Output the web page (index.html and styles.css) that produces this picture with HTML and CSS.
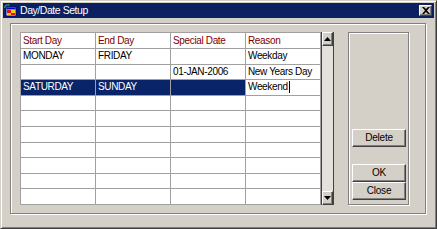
FILE: index.html
```html
<!DOCTYPE html>
<html>
<head>
<meta charset="utf-8">
<link rel="stylesheet" href="styles.css">
</head>
<body>
<div class="win">
  <div class="titlebar">
    <svg class="appicon" viewBox="0 0 13 13" width="13" height="13">
      <rect x="2" y="3" width="10" height="9" fill="#fff" stroke="#0000a0" stroke-width="1"/>
      <rect x="2.5" y="3.5" width="9" height="2" fill="#0000c0"/>
      <rect x="3" y="6" width="4" height="3" fill="#e01010"/>
      <rect x="7" y="6" width="4" height="3" fill="#f0d000"/>
      <rect x="3" y="9" width="4" height="2" fill="#f0d000"/>
      <rect x="7" y="9" width="4" height="2" fill="#e01010"/>
      <path d="M0.5 4 C1 1.5 3 0.5 5 1" fill="none" stroke="#20a040" stroke-width="1.2"/>
      <path d="M4 0 L6 1 L4.5 2.5" fill="#20a040"/>
    </svg>
    <span class="title">Day/Date Setup</span>
    <div class="closebtn">
      <svg viewBox="0 0 8 7" width="8" height="7"><path d="M0 0 L2 0 L4 2 L6 0 L8 0 L5 3.5 L8 7 L6 7 L4 5 L2 7 L0 7 L3 3.5 Z" fill="#000"/></svg>
    </div>
  </div>
  <div class="client">
    <div class="frame">
      <div class="row">
        <div class="grid">
          <div class="cell hd">Start Day</div><div class="cell hd">End Day</div><div class="cell hd">Special Date</div><div class="cell hd">Reason</div>
          <div class="cell">MONDAY</div><div class="cell">FRIDAY</div><div class="cell"></div><div class="cell">Weekday</div>
          <div class="cell"></div><div class="cell"></div><div class="cell">01-JAN-2006</div><div class="cell">New Years Day</div>
          <div class="cell sel">SATURDAY</div><div class="cell sel">SUNDAY</div><div class="cell sel"></div><div class="cell edit">Weekend<span class="caret"></span></div>
          <div class="cell"></div><div class="cell"></div><div class="cell"></div><div class="cell"></div>
          <div class="cell"></div><div class="cell"></div><div class="cell"></div><div class="cell"></div>
          <div class="cell"></div><div class="cell"></div><div class="cell"></div><div class="cell"></div>
          <div class="cell"></div><div class="cell"></div><div class="cell"></div><div class="cell"></div>
          <div class="cell"></div><div class="cell"></div><div class="cell"></div><div class="cell"></div>
          <div class="cell"></div><div class="cell"></div><div class="cell"></div><div class="cell"></div>
          <div class="cell"></div><div class="cell"></div><div class="cell"></div><div class="cell"></div>
        </div>
        <div class="scrollbar">
          <div class="sbtn"><svg viewBox="0 0 7 4" width="7" height="4"><path d="M3.5 0 L7 4 L0 4 Z" fill="#000"/></svg></div>
          <div class="track"></div>
          <div class="sbtn"><svg viewBox="0 0 7 4" width="7" height="4"><path d="M0 0 L7 0 L3.5 4 Z" fill="#000"/></svg></div>
        </div>
        <div class="side">
          <button class="btn">Delete</button>
          <div class="gap"></div>
          <button class="btn">OK</button>
          <button class="btn">Close</button>
        </div>
      </div>
    </div>
  </div>
</div>
</body>
</html>
```
FILE: styles.css
```css
* { box-sizing: border-box; }
html, body { margin: 0; padding: 0; background: #d4d0c8; }
body {
  width: 437px; height: 229px; overflow: hidden;
  font-family: "Liberation Sans", Arial, sans-serif;
  font-size: 10px;
}
.win {
  width: 437px; height: 229px;
  border: 1px solid;
  border-color: #d4d0c8 #404040 #404040 #d4d0c8;
  box-shadow: inset 1px 1px #fff, inset -1px -1px #808080;
  padding: 2px;
  display: flex; flex-direction: column;
  background: #d4d0c8;
}
.titlebar {
  height: 15px; flex: none;
  background: #0a2060;
  display: flex; align-items: center;
  padding: 0 2px 0 1px;
  color: #fff;
}
.appicon { flex: none; }
.title {
  flex: 1; margin-left: 3px;
  font-size: 10.5px; letter-spacing: -0.45px;
  line-height: 15px;
}
.closebtn {
  width: 13px; height: 11px; flex: none;
  background: #d4d0c8;
  border: 1px solid;
  border-color: #fff #404040 #404040 #fff;
  box-shadow: inset -1px -1px #808080;
  display: flex; align-items: center; justify-content: center;
}
.client {
  flex: 1;
  padding: 5px 8px 12px 7px;
  display: flex;
}
.frame {
  flex: 1;
  border: 1px solid #808080;
  box-shadow: inset 1px 1px #fff, 1px 1px #fff;
  padding: 8px 0 0 9px;
}
.row {
  display: flex; align-items: stretch;
}
.grid {
  display: grid;
  grid-template-columns: 75px 75px 75px 75px;
  grid-template-rows: 16px repeat(10, 15.6px);
  border-left: 1px solid #a0a0a0;
  border-top: 1px solid #a0a0a0;
  background: #fff;
}
.cell {
  border-right: 1px solid #a0a0a0;
  border-bottom: 1px solid #a0a0a0;
  padding-left: 2px;
  line-height: 14px;
  white-space: nowrap; overflow: hidden;
  color: #000;
  letter-spacing: -0.35px;
}
.hd { color: #800000; line-height: 15px; }
.sel { background: #0a246a; color: #fff; }
.caret {
  display: inline-block; width: 1px; height: 12px;
  background: #000; vertical-align: -3px; margin-left: 1px;
}
.scrollbar {
  width: 13px;
  display: flex; flex-direction: column;
  border-left: 1px solid #404040;
  border-right: 1px solid #404040;
  background: #e4e1dc;
}
.sbtn {
  height: 14px; flex: none;
  background: #d4d0c8;
  border: 1px solid;
  border-color: #fff #404040 #404040 #fff;
  box-shadow: inset -1px -1px #808080;
  display: flex; align-items: center; justify-content: center;
}
.track { flex: 1; }
.side {
  width: 61px;
  margin-left: 14px;
  border: 1px solid #808080;
  box-shadow: inset 1px 1px #fff, 1px 1px #fff;
  padding: 0 3px 4px 3px;
  display: flex; flex-direction: column; justify-content: flex-end;
}
.gap { height: 17px; flex: none; }
.btn {
  height: 18px; width: 54px; flex: none;
  margin: 0; padding: 0;
  font-family: "Liberation Sans", Arial, sans-serif;
  font-size: 10px; color: #000;
  letter-spacing: -0.2px;
  background: #d4d0c8;
  border: 1px solid;
  border-color: #fff #404040 #404040 #fff;
  box-shadow: inset -1px -1px #808080;
}
```
